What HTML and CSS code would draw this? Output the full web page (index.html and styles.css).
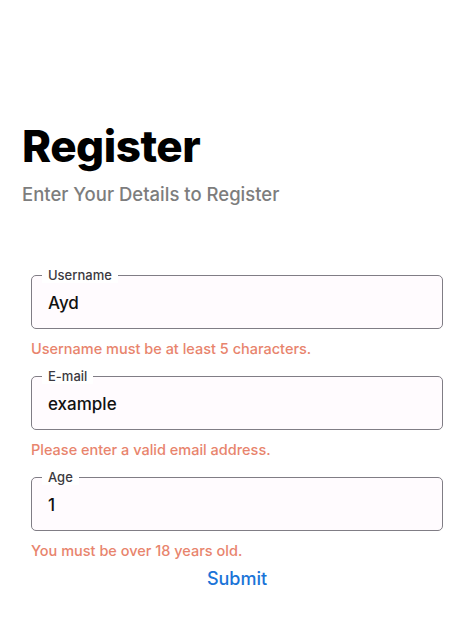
FILE: index.html
```html
<!DOCTYPE html>
<html lang="en">
<head>
<meta charset="utf-8">
<title>Register</title>
<link rel="stylesheet" href="styles.css">
</head>
<body>
<main class="page">
  <header class="head">
    <h1 class="title">Register</h1>
    <p class="subtitle">Enter Your Details to Register</p>
  </header>
  <form class="form">
    <div class="field">
      <div class="box">
        <span class="label">Username</span>
        <span class="value">Ayd</span>
      </div>
      <p class="error">Username must be at least 5 characters.</p>
    </div>
    <div class="field">
      <div class="box">
        <span class="label">E-mail</span>
        <span class="value">example</span>
      </div>
      <p class="error">Please enter a valid email address.</p>
    </div>
    <div class="field">
      <div class="box">
        <span class="label">Age</span>
        <span class="value">1</span>
      </div>
      <p class="error">You must be over 18 years old.</p>
    </div>
    <div class="actions">
      <button type="button" class="submit">Submit</button>
    </div>
  </form>
</main>
</body>
</html>
```

FILE: styles.css
```css
html, body {
  margin: 0;
  padding: 0;
  background: #ffffff;
}
body {
  font-family: Inter, "Noto Sans", "Liberation Sans", sans-serif;
  color: #000;
}
.page {
  width: 474px;
  height: 618px;
  box-sizing: border-box;
  padding-top: 119px;
}
.head {
  padding-left: 22px;
}
.title {
  margin: 0;
  font-size: 44px;
  line-height: 54px;
  font-weight: 800;
  letter-spacing: -0.5px;
}
.subtitle {
  margin: 10px 0 0;
  font-size: 18.5px;
  line-height: 22px;
  font-weight: 500;
  color: #7d7d7d;
}
.form {
  margin-top: 70px;
  padding: 0 31px;
  display: flex;
  flex-direction: column;
}
.field {
  display: flex;
  flex-direction: column;
}
.box {
  position: relative;
  height: 54px;
  box-sizing: border-box;
  padding: 0 16px;
  border: 1.5px solid #807d85;
  border-radius: 5px;
  background: #fffbfe;
  display: flex;
  align-items: center;
}
.label {
  position: absolute;
  left: 10px;
  top: -9px;
  padding: 0 6px;
  background: #ffffff;
  font-size: 13px;
  line-height: 16px;
  font-weight: 500;
  color: #3b3940;
}
.value {
  font-size: 17px;
  line-height: 22px;
  font-weight: 500;
  color: #111;
  margin-top: 2px;
}
.error {
  margin: 11px 0 18px;
  font-size: 14.5px;
  line-height: 18px;
  font-weight: 500;
  color: #e8846d;
}
.actions {
  display: flex;
  justify-content: center;
  margin-top: -10px;
}
.submit {
  border: 0;
  background: none;
  padding: 0;
  font-family: inherit;
  font-size: 18px;
  line-height: 22px;
  font-weight: 500;
  color: #1a74d8;
}
```
